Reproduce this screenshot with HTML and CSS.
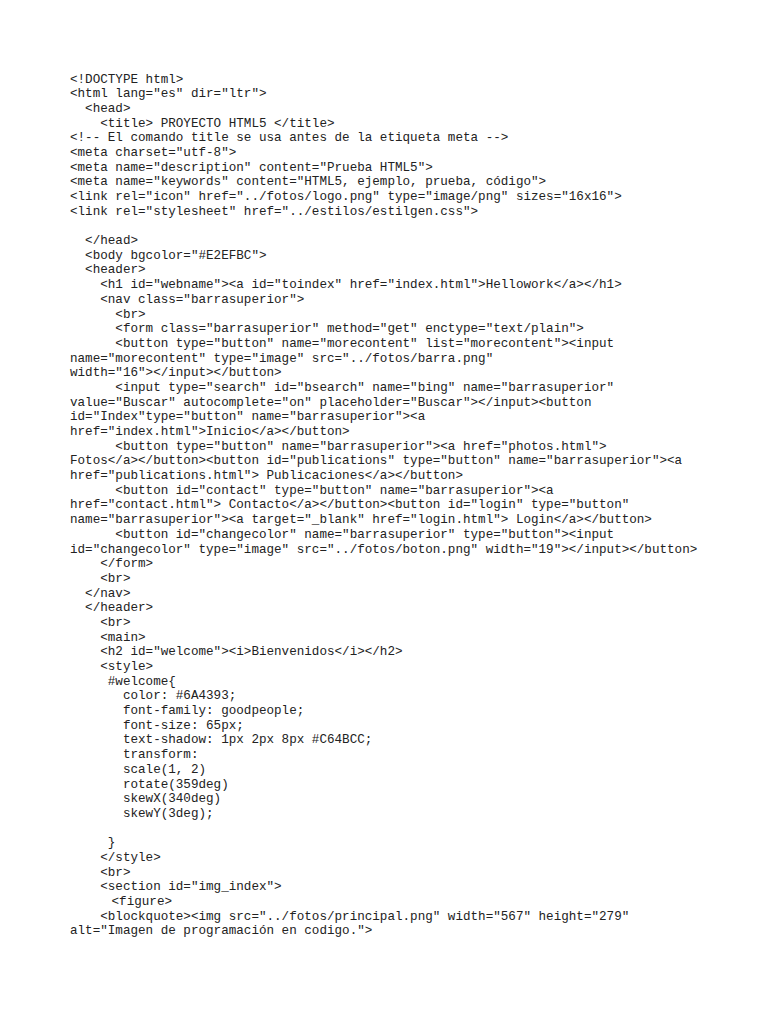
FILE: index.html
```html
<!DOCTYPE html>
<html lang="es">
<head>
<meta charset="utf-8">
<title>PROYECTO HTML5</title>
<link rel="stylesheet" href="styles.css">
</head>
<body>
<main class="page">
<pre class="code">&lt;!DOCTYPE html&gt;
&lt;html lang="es" dir="ltr"&gt;
  &lt;head&gt;
    &lt;title&gt; PROYECTO HTML5 &lt;/title&gt;
&lt;!-- El comando title se usa antes de la etiqueta meta --&gt;
&lt;meta charset="utf-8"&gt;
&lt;meta name="description" content="Prueba HTML5"&gt;
&lt;meta name="keywords" content="HTML5, ejemplo, prueba, código"&gt;
&lt;link rel="icon" href="../fotos/logo.png" type="image/png" sizes="16x16"&gt;
&lt;link rel="stylesheet" href="../estilos/estilgen.css"&gt;

  &lt;/head&gt;
  &lt;body bgcolor="#E2EFBC"&gt;
  &lt;header&gt;
    &lt;h1 id="webname"&gt;&lt;a id="toindex" href="index.html"&gt;Hellowork&lt;/a&gt;&lt;/h1&gt;
    &lt;nav class="barrasuperior"&gt;
      &lt;br&gt;
      &lt;form class="barrasuperior" method="get" enctype="text/plain"&gt;
      &lt;button type="button" name="morecontent" list="morecontent"&gt;&lt;input
name="morecontent" type="image" src="../fotos/barra.png"
width="16"&gt;&lt;/input&gt;&lt;/button&gt;
      &lt;input type="search" id="bsearch" name="bing" name="barrasuperior"
value="Buscar" autocomplete="on" placeholder="Buscar"&gt;&lt;/input&gt;&lt;button
id="Index"type="button" name="barrasuperior"&gt;&lt;a
href="index.html"&gt;Inicio&lt;/a&gt;&lt;/button&gt;
      &lt;button type="button" name="barrasuperior"&gt;&lt;a href="photos.html"&gt;
Fotos&lt;/a&gt;&lt;/button&gt;&lt;button id="publications" type="button" name="barrasuperior"&gt;&lt;a
href="publications.html"&gt; Publicaciones&lt;/a&gt;&lt;/button&gt;
      &lt;button id="contact" type="button" name="barrasuperior"&gt;&lt;a
href="contact.html"&gt; Contacto&lt;/a&gt;&lt;/button&gt;&lt;button id="login" type="button"
name="barrasuperior"&gt;&lt;a target="_blank" href="login.html"&gt; Login&lt;/a&gt;&lt;/button&gt;
      &lt;button id="changecolor" name="barrasuperior" type="button"&gt;&lt;input
id="changecolor" type="image" src="../fotos/boton.png" width="19"&gt;&lt;/input&gt;&lt;/button&gt;
    &lt;/form&gt;
    &lt;br&gt;
  &lt;/nav&gt;
  &lt;/header&gt;
    &lt;br&gt;
    &lt;main&gt;
    &lt;h2 id="welcome"&gt;&lt;i&gt;Bienvenidos&lt;/i&gt;&lt;/h2&gt;
    &lt;style&gt;
     #welcome{
       color: #6A4393;
       font-family: goodpeople;
       font-size: 65px;
       text-shadow: 1px 2px 8px #C64BCC;
       transform:
       scale(1, 2)
       rotate(359deg)
       skewX(340deg)
       skewY(3deg);

     }
    &lt;/style&gt;
    &lt;br&gt;
    &lt;section id="img_index"&gt;
     <span class="half">&lt;figure&gt;</span>
    &lt;blockquote&gt;&lt;img src="../fotos/principal.png" width="567" height="279"
alt="Imagen de programación en codigo."&gt;</pre>
</main>
</body>
</html>
```

FILE: styles.css
```css
html, body {
  margin: 0;
  padding: 0;
  background: #ffffff;
}

.page {
  display: block;
  padding: 72.5px 0 0 70px;
}

.code {
  margin: 0;
  font-family: "Liberation Mono", "DejaVu Sans Mono", monospace;
  font-size: 12.6px;
  line-height: 14.69px;
  color: #222222;
  white-space: pre;
}

.half {
  padding-left: 0.5ch;
}
```
